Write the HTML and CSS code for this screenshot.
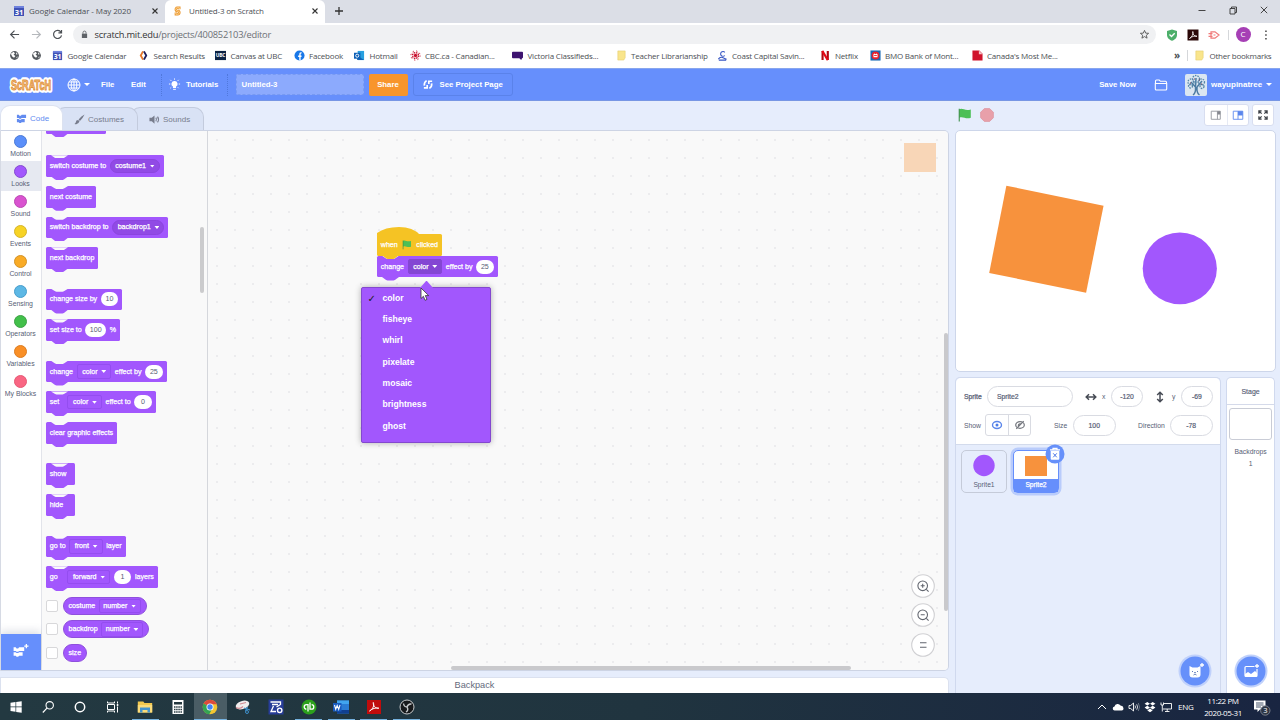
FILE: index.html
```
<!DOCTYPE html>
<html lang="en">
<head>
    <meta charset="utf-8">
    <meta name="viewport" content="width=device-width, initial-scale=1">
    <title>Untitled-3 on Scratch</title>
    <link rel="stylesheet" href="styles.css">
</head>
<body>

    <!-- shared icons -->
    <svg class="defs" width="0" height="0">
        <symbol id="globe" viewBox="0 0 12 12"><circle cx="6" cy="6" r="4.8" fill="#555a5f"/><path d="M2 4l3-2 1.5 1.5L5 5.2l2 1.3-1.5 2L3.5 7zM8 2.5l1.500 2-1.800.4zM8 7.500l1.600-.5-1 2z" fill="#fff"/></symbol>
        <symbol id="note" viewBox="0 0 12 12"><path d="M2 1h8v7.500L8.500 11H2z" fill="#f9e58c" stroke="#e3cb6a" stroke-width=".6"/></symbol>
        <symbol id="flag" viewBox="0 0 14 15"><path d="M1 1.500c3.500-2.200 5.500 2 12 0v8.500c-5 2.200-8-2-12 0z" fill="#4cbf56"/><path d="M1 .8V14" stroke="#3a8f47" stroke-width="1.200"/></symbol>
        <symbol id="blocks" viewBox="0 0 12 10"><path d="M1 1h2l.8 1h1.500L6.200 1H11v3.400H6.200l-.9.8H3.800L3 4.400H1zM1 5.600h2l.8.8h1.500l.9-.8H9.500V9H6.200l-.9.8H3.800L3 9H1z"/></symbol>
    </svg>

    <div class="tabstrip">
        <div class="tab">
            <svg class="ico" viewBox="0 0 12 12"><path d="M1 2h10v9H1z" fill="#3f51b5"/><path d="M1 1h10v2H1z" fill="#6f82dd"/><text x="6" y="9.600" font-size="7.500" font-weight="700" text-anchor="middle" fill="#fff">31</text></svg>
            <span>Google Calendar - May 2020</span>
            <svg class="close" viewBox="0 0 8 8"><path d="M1.500 1.500l5 5M6.500 1.500l-5 5"/></svg>
        </div>
        <div class="tab active">
            <svg class="ico" viewBox="0 0 12 12"><path d="M8 4.200V2.500H5.500C3.600 2.500 3.800 6 5.500 6h1.200C8.700 6 8.500 9.500 6.300 9.500H4.200V7.700" fill="none" stroke="#e9952d" stroke-width="2.600"/><path d="M8 4.200V2.500H5.500C3.600 2.500 3.800 6 5.500 6h1.200C8.700 6 8.500 9.500 6.300 9.500H4.200V7.700" fill="none" stroke="#ffd999" stroke-width="1"/></svg>
            <span>Untitled-3 on Scratch</span>
            <svg class="close" viewBox="0 0 8 8"><path d="M1.500 1.500l5 5M6.500 1.500l-5 5"/></svg>
        </div>
        <svg class="plus" viewBox="0 0 10 10"><path d="M5 1v8M1 5h8"/></svg>
        <div class="winbtns">
            <svg viewBox="0 0 10 10"><path d="M1.500 5.500h7"/></svg>
            <svg viewBox="0 0 10 10"><path d="M2 3.500h5V9H2zM3.500 3.500V2h5v5.500H7"/></svg>
            <svg viewBox="0 0 10 10"><path d="M1.800 1.800l6.400 6.400M8.200 1.800L1.800 8.200"/></svg>
        </div>
    </div>

    <div class="toolbar">
        <svg class="nav" viewBox="0 0 12 12"><path d="M11 6H2M6 1.800L1.800 6 6 10.200"/></svg>
        <svg class="nav off" viewBox="0 0 12 12"><path d="M1 6h9M6 1.800L10.200 6 6 10.200"/></svg>
        <svg class="nav" viewBox="0 0 12 12"><path d="M9.800 3.500A4.400 4.400 0 1 0 10.400 7M10.400 1v3.300H7"/></svg>
        <div class="url">
            <svg class="lock" viewBox="0 0 8 10"><path d="M1 4h6v5H1z" fill="#5f6368"/><path d="M2.300 4V2.800a1.700 1.700 0 0 1 3.400 0V4" fill="none" stroke="#5f6368"/></svg>
            <span>scratch.mit.edu<i>/projects/400852103/editor</i></span>
            <svg class="star" viewBox="0 0 12 12"><path d="M6 1.500l1.300 3 3.200.2-2.500 2.100.8 3.200L6 8.300 3.200 10 4 6.800 1.500 4.700l3.200-.2z"/></svg>
        </div>
        <div class="exts">
            <svg viewBox="0 0 12 12"><path d="M6 .5l5 1.500v4c0 3-2.500 4.800-5 5.800C3.500 10.800 1 9 1 6V2z" fill="#4caf6a"/><path d="M3.500 5.500l2 2 3.200-3.300" fill="none" stroke="#fff" stroke-width="1.300"/></svg>
            <svg viewBox="0 0 12 12"><path d="M.5.500h11v11H.5z" fill="#2b0808"/><path d="M2.500 9.500C5 8 6.500 5 5.800 2.500 5.500 5 7 7.500 10 7.300 7.500 6.800 5 7.300 2.500 9.500z" fill="none" stroke="#fff" stroke-width=".8"/></svg>
            <svg viewBox="0 0 12 12"><path d="M3 2.800h4L11 6 7 9.200H3zM.5 4.700h4M.5 7.300h4M5.500 6h2" fill="none" stroke="#f07a7a" stroke-width="1.200"/></svg>
            <b class="sep"></b>
            <span class="profile">C</span>
            <svg viewBox="0 0 12 12"><path d="M5.200 1.500h1.500v1.500H5.200zM5.200 5.200h1.500v1.500H5.200zM5.200 9h1.500v1.500H5.200z" fill="#444"/></svg>
        </div>
    </div>

    <div class="bookmarks">
        <span><svg viewBox="0 0 12 12"><use href="#globe"/></svg></span>
        <span><svg viewBox="0 0 12 12"><use href="#globe"/></svg></span>
        <span><svg viewBox="0 0 12 12"><path d="M1 2h10v9H1z" fill="#3f51b5"/><path d="M1 1h10v2H1z" fill="#6f82dd"/><text x="6" y="9.600" font-size="7.500" font-weight="700" text-anchor="middle" fill="#fff">31</text></svg>Google Calendar</span>
        <span><svg viewBox="0 0 12 12"><path d="M5.500 1.500L3 6l2.500 4.500" fill="none" stroke="#e5782c" stroke-width="2"/><path d="M6.500 1.500L9 6l-2.500 4.500" fill="none" stroke="#1e1f5e" stroke-width="2"/></svg>Search Results</span>
        <span><svg viewBox="0 0 12 12"><path d="M0 1h12v10H0z" fill="#0c2344"/><text x="6" y="8" font-size="5.300" font-weight="700" text-anchor="middle" fill="#fff">UBC</text></svg>Canvas at UBC</span>
        <span><svg viewBox="0 0 12 12"><circle cx="6" cy="6" r="5.500" fill="#1877e8"/><path d="M6.500 11.500V6.800M4.500 6.800h3.700M6.500 7V4.500Q6.500 3 8.300 3.200" fill="none" stroke="#fff" stroke-width="1.500"/></svg>Facebook</span>
        <span><svg viewBox="0 0 12 12"><path d="M4 1h7v10H4z" fill="#28a0e0"/><path d="M3.500 6L11 11H3.500z" fill="#1363b5"/><path d="M0 3h7v6.500H0z" fill="#0a5eb5"/><circle cx="3.500" cy="6.200" r="1.700" fill="none" stroke="#fff"/></svg>Hotmail</span>
        <span><svg viewBox="0 0 12 12"><circle cx="6" cy="6" r="1.800" fill="#c8102e"/><circle cx="6" cy="6" r="3.200" fill="none" stroke="#c8102e" stroke-width="1.500" stroke-dasharray="1.700 .8"/><circle cx="6" cy="6" r="5" fill="none" stroke="#c8102e" stroke-width="1" stroke-dasharray="1.500 2.430"/></svg>CBC.ca - Canadian...</span>
        <span><svg viewBox="0 0 12 12"><path d="M1 2h10q1 0 1 1v5q0 1-1 1l-1 2-2-2H1Q0 9 0 8V3q0-1 1-1z" fill="#3e1470"/></svg>Victoria Classifieds...</span>
        <span><svg viewBox="0 0 12 12"><use href="#note"/></svg>Teacher Librarianship</span>
        <span><svg viewBox="0 0 12 12"><path d="M8.500 2.500A2.600 2.600 0 1 0 8.500 6M1.500 10q2-3 4.500-1.800T10.500 10M2 11h8" fill="none" stroke="#3857c4" stroke-width="1.200"/></svg>Coast Capital Savin...</span>
        <span><svg viewBox="0 0 12 12"><path d="M2.800 1v10M8.500 1v10" stroke="#b20710" stroke-width="2.300"/><path d="M2.500 1l6 10" stroke="#e50914" stroke-width="2.300"/></svg>Netflix</span>
        <span><svg viewBox="0 0 12 12"><path d="M.5.500h11v11H.5z" fill="#1569b5"/><circle cx="6" cy="6" r="4.300" fill="#e8212d"/><path d="M3.800 8V4.500l1.100-.7L6 4.500l1.100-.7 1.100.7V8z" fill="#fff"/><path d="M4.500 6h3" stroke="#e8212d"/></svg>BMO Bank of Mont...</span>
        <span><svg viewBox="0 0 12 12"><path d="M.5.500H8L11.500 4v7.500H.5z" fill="#d0142c"/><path d="M7.500.500L11.500 4.500H7.500z" fill="#f3c5c8"/></svg>Canada's Most Me...</span>
        <span class="more">»</span>
        <span class="other"><svg viewBox="0 0 12 12"><use href="#note"/></svg>Other bookmarks</span>
    </div>

    <div class="menubar">
        <svg class="logo" viewBox="0 0 48 22"><g stroke-linejoin="round" font-weight="700" text-anchor="middle"><text class="logo-out" x="24" y="16" textLength="40" lengthAdjust="spacingAndGlyphs">ScRATcH</text><text class="logo-in" x="24" y="16" textLength="40" lengthAdjust="spacingAndGlyphs">ScRATcH</text></g></svg>
        <div class="lang"><svg viewBox="0 0 14 14"><g fill="none" stroke="#fff" stroke-width="1"><circle cx="7" cy="7" r="6"/><ellipse cx="7" cy="7" rx="2.800" ry="6"/><path d="M1 7h12M2 4h10M2 10h10M7 1v12"/></g></svg><b class="caret"></b></div>
        <span>File</span>
        <span>Edit</span>
        <div class="tutorials"><svg viewBox="0 0 14 14"><path d="M7 3.200a3.200 3.200 0 0 1 1.700 6v1.600H5.300V9.200a3.200 3.200 0 0 1 1.700-6z" fill="#fff"/><path d="M5.500 12.200h3M7 .5v1.300M1 6.500h1.500M11.500 6.500H13M2.500 2l1.100 1.100M11.500 2l-1.100 1.100M2.500 11l1-1M11.500 11l-1-1" stroke="#fff"/></svg>Tutorials</div>
        <div class="title">Untitled-3</div>
        <div class="share">Share</div>
        <div class="see"><svg viewBox="0 0 12 12"><path d="M4.500 1.800Q1.500 3.500 2 7.300M1.500 9.600h3.600V6.500M7.500 10.200Q10.500 8.500 10 4.700M10.500 2.400H6.900V5.500" fill="none" stroke="#fff" stroke-width="1.800"/></svg>See Project Page</div>
        <div class="account">
            <span>Save Now</span>
            <svg class="folder" viewBox="0 0 14 12"><path d="M1.500 4.500V2q0-1 1-1h2.700l1.300 1.300h5q1 0 1 1v1.200M1.300 4.500h11.400V10q0 1-1 1H2.300q-1 0-1-1z" fill="none" stroke="#fff" stroke-width="1.100"/></svg>
            <svg class="avatar" viewBox="0 0 22 22"><rect width="22" height="22" rx="2" fill="#dbe6f1"/><path d="M8 21q3-2 2.500-8L6 8M10.500 13l.5-9M12 13l5-6M14.500 21q-3-2-2.500-8" fill="none" stroke="#4c7ba2" stroke-width="1.500"/><g fill="none" stroke="#5686a8" stroke-width="1.300" stroke-dasharray="1.500 1"><circle cx="6" cy="8" r="3"/><circle cx="11" cy="5" r="3.500"/><circle cx="16.500" cy="8" r="3"/><circle cx="5.500" cy="12" r="2"/><circle cx="17" cy="12.500" r="2"/></g><path d="M5 9h1M9 5h1M14 6h1M16 10h1" stroke="#8d4054"/></svg>
            <span class="user">wayupinatree</span>
            <b class="caret"></b>
        </div>
    </div>

    <div class="editor">
        <div class="left">
            <div class="modes">
                <div class="mode on"><svg viewBox="0 0 12 10"><use href="#blocks"/></svg>Code</div>
                <div class="mode costumes"><svg viewBox="0 0 12 12"><path d="M11.500.500Q8 2 5 6l1.500 1.500Q10 4 11.500.500zM4.500 6.500Q2 6.500 2 9 1.500 10.500.5 10.800 4.500 12.500 6 8z" fill="#777c8c"/></svg>Costumes</div>
                <div class="mode sounds"><svg viewBox="0 0 12 12"><path d="M.5 4h2.500L6 1.500v9L3 8H.5z" fill="#777c8c"/><path d="M7.500 4q1.300 2 0 4M9.300 2.800q2.200 3.200 0 6.400" fill="none" stroke="#777c8c" stroke-width="1.200"/></svg>Sounds</div>
            </div>

            <div class="code">
                <div class="categories">
                    <div class="cat"><i class="motion"></i>Motion</div>
                    <div class="cat selected"><i class="looks"></i>Looks</div>
                    <div class="cat"><i class="sound"></i>Sound</div>
                    <div class="cat"><i class="events"></i>Events</div>
                    <div class="cat"><i class="control"></i>Control</div>
                    <div class="cat"><i class="sensing"></i>Sensing</div>
                    <div class="cat"><i class="operators"></i>Operators</div>
                    <div class="cat"><i class="variables"></i>Variables</div>
                    <div class="cat"><i class="myblocks"></i>My Blocks</div>
                    <div class="extension"><svg viewBox="0 0 16 14"><g transform="translate(0 3)"><use href="#blocks" width="13" height="10"/></g><path d="M13.500 .8v4M11.500 2.800h4" stroke="#fff" stroke-width="1.200"/></svg></div>
                </div>

                <div class="palette">
                    <div class="block cut"></div>
                    <div class="block"><span>switch costume to</span><em class="pill">costume1</em></div>
                    <div class="block"><span>next costume</span></div>
                    <div class="block"><span>switch backdrop to</span><em class="pill">backdrop1</em></div>
                    <div class="block end"><span>next backdrop</span></div>
                    <div class="block"><span>change size by</span><u>10</u></div>
                    <div class="block end"><span>set size to</span><u>100</u><span>%</span></div>
                    <div class="block"><span>change</span><em>color</em><span>effect by</span><u>25</u></div>
                    <div class="block"><span class="short">set</span><em>color</em><span>effect to</span><u>0</u></div>
                    <div class="block end"><span>clear graphic effects</span></div>
                    <div class="block"><span>show</span></div>
                    <div class="block end"><span>hide</span></div>
                    <div class="block"><span class="short">go to</span><em>front</em><span>layer</span></div>
                    <div class="block last"><span class="short">go</span><em>forward</em><u>1</u><span>layers</span></div>
                    <div class="row"><i></i><div class="reporter"><span>costume</span><em>number</em></div></div>
                    <div class="row"><i></i><div class="reporter"><span>backdrop</span><em>number</em></div></div>
                    <div class="row"><i></i><div class="reporter"><span>size</span></div></div>
                    <div class="palette-bar"></div>
                </div>

                <div class="workspace">
                    <div class="ghost-sprite"></div>
                    <div class="script">
                        <div class="block hat"><svg class="hump" viewBox="0 0 65 8"><path d="M0 8V6Q8 0 22 0T43 8z" fill="#f5c324"/></svg><span>when</span><svg class="flag" viewBox="0 0 14 15"><use href="#flag"/></svg><span>clicked</span></div>
                        <div class="block"><span>change</span><em class="open">color</em><span>effect by</span><u>25</u></div>
                    </div>
                    <div class="dropdown">
                        <div class="checked">color</div>
                        <div>fisheye</div>
                        <div>whirl</div>
                        <div>pixelate</div>
                        <div>mosaic</div>
                        <div>brightness</div>
                        <div>ghost</div>
                    </div>
                    <svg class="cursor" viewBox="0 0 10 15"><path d="M1 1v10.500l2.400-2.200L5 13.300l2-.9-1.700-3.800h3.400z" fill="#fff" stroke="#333" stroke-width=".8"/></svg>
                    <div class="zoom">
                        <svg viewBox="0 0 24 24"><circle class="ring" cx="12" cy="12" r="11.300"/><circle cx="11.700" cy="11.800" r="4.800"/><path d="M15.300 15.300l2.300 2.300M9.700 11.800h4M11.700 9.800v4"/></svg>
                        <svg viewBox="0 0 24 24"><circle class="ring" cx="12" cy="12" r="11.300"/><circle cx="11.700" cy="11.800" r="4.800"/><path d="M15.300 15.300l2.300 2.300M9.700 11.800h4"/></svg>
                        <svg viewBox="0 0 24 24"><circle class="ring" cx="12" cy="12" r="11.300"/><path d="M9 9.800h6.500M9 14.200h6.500"/></svg>
                    </div>
                    <div class="hbar"></div>
                    <div class="vbar"></div>
                </div>
            </div>

            <div class="backpack">Backpack</div>
        </div>

        <div class="right">
            <div class="stage-head">
                <svg class="go" viewBox="0 0 14 15"><use href="#flag"/></svg>
                <svg class="stop" viewBox="0 0 14 14"><path d="M4.300.600h5.400l3.700 3.700v5.400l-3.700 3.700H4.300L.6 9.700V4.300z" fill="#e8a0aa" stroke="#dd929e" stroke-width=".7"/></svg>
                <div class="sizes">
                    <svg viewBox="0 0 22 21"><path d="M6 6.500h9.500v8.500H6zM12.500 6.500v8.500" fill="none" stroke="#9a9ca3"/><path d="M12.500 6.500h3v3.500h-3z" fill="#85878e"/></svg>
                    <svg viewBox="0 0 22 21"><path d="M5.500 6.500H15.500v8.500H5.500zM10.500 6.500v8.500" fill="none" stroke="#6690f0"/><path d="M10.500 6.500h5v4.500h-5z" fill="#5b86ec"/></svg>
                </div>
                <div class="full"><svg viewBox="0 0 22 21"><path d="M6.500 9V6h3M12.500 6h3v3M15.500 12v3h-3M9.500 15h-3v-3M6.500 6l3 3M15.500 6l-3 3M15.500 15l-3-3M6.500 15l3-3" fill="none" stroke="#3c4046" stroke-width="1.400"/></svg></div>
            </div>
            <div class="stage"><svg viewBox="0 0 320 240"><path d="M50.500 54.500l97.500 20-17.500 87.500L33.300 142z" fill="#f7923d"/><ellipse cx="224.500" cy="137.500" rx="37.200" ry="36" fill="#a257fd"/></svg></div>
            <div class="panes">
                <div class="sprites">
                    <div class="info">
                        <div class="line">
                            <strong class="lbl">Sprite</strong><span class="field name">Sprite2</span>
                            <svg class="arrows" viewBox="0 0 12 12"><path d="M2 6h8M4 3.200L1.200 6 4 8.800M8 3.200L10.800 6 8 8.800"/></svg><span class="x">x</span><span class="field fx">-120</span>
                            <svg class="arrows" viewBox="0 0 12 12"><path d="M6 2v8M3.200 4L6 1.200 8.800 4M3.200 8L6 10.800 8.800 8"/></svg><span class="y">y</span><span class="field fy">-69</span>
                        </div>
                        <div class="line second">
                            <span class="lbl">Show</span>
                            <div class="eyes">
                                <svg viewBox="0 0 12 12"><ellipse cx="6" cy="6" rx="4.500" ry="3.500" fill="none" stroke="#5b86ea" stroke-width="1.400"/><circle cx="6" cy="6" r="1.500" fill="#4a7be8"/></svg>
                                <svg viewBox="0 0 12 12"><g fill="none" stroke="#74777e" stroke-width="1.200"><ellipse cx="6" cy="6" rx="4.300" ry="3.400"/><path d="M2.300 9.800l7.400-7.600M4.500 7.200Q4 5 6.500 4.500"/></g></svg>
                            </div>
                            <span class="size">Size</span><span class="field fs">100</span>
                            <span class="dir">Direction</span><span class="field fs">-78</span>
                        </div>
                    </div>
                    <div class="tiles">
                        <div class="tile"><svg viewBox="0 0 44 28"><circle cx="22" cy="14.500" r="10.700" fill="#a257fd"/></svg><span>Sprite1</span></div>
                        <div class="tile picked"><svg viewBox="0 0 44 28"><path d="M11 5h22v20H11z" fill="#f7923d"/></svg><span>Sprite2</span>
                            <svg class="trash" viewBox="0 0 20 20"><circle cx="10" cy="10" r="9.500" fill="#6690fa"/><path d="M5 5.800h10M8 5.500V4.300h4v1.200" fill="none" stroke="#fff" stroke-width="1.200"/><path d="M5.700 6.800h8.600v8q0 1-1 1H6.700q-1 0-1-1z" fill="#fff"/><path d="M8.200 9.300l3.600 4M11.800 9.300l-3.600 4" stroke="#4f79e8"/></svg>
                        </div>
                    </div>
                    <svg class="add" viewBox="0 0 34 34"><circle cx="17" cy="17" r="16.500" fill="#c0d1fb"/><circle cx="17" cy="17" r="14.500" fill="#6690fa"/><path d="M11.500 12l3 1.500h5l3-1.500v8.500q0 3-3 3h-5q-3 0-3-3z" fill="#fff"/><path d="M14 17.500h1M19 17.500h1M16.200 18.500h1.600M15.500 21l1.500-1 1.500 1" stroke="#5470b5" fill="none" stroke-width=".9"/><path d="M24 9v4M22 11h4" stroke="#fff" stroke-width="1.300"/></svg>
                </div>
                <div class="backdrops">
                    <div class="label">Stage</div>
                    <div class="thumb"></div>
                    <span>Backdrops</span>
                    <span class="count">1</span>
                    <svg class="add" viewBox="0 0 34 34"><circle cx="17" cy="17" r="16.500" fill="#c0d1fb"/><circle cx="17" cy="17" r="14.500" fill="#6690fa"/><path d="M20.500 12.500H12q-1 0-1 1v8q0 1 1 1h10q1 0 1-1V15" fill="none" stroke="#fff" stroke-width="1.200"/><path d="M11 20l3-2 3 2 4-3 2 2v3.500H11z" fill="#fff"/><path d="M23 10v4M21 12h4" stroke="#fff" stroke-width="1.300"/></svg>
                </div>
            </div>
        </div>
    </div>

    <div class="taskbar">
        <div class="apps">
            <div><svg viewBox="0 0 16 16"><path d="M2.500 3.800l5-.7v4.500h-5zM8.200 3l5.500-.8v5.400H8.200zM2.500 8.300h5v4.500l-5-.7zM8.200 8.300h5.500v5.400l-5.500-.8z" fill="#fff"/></svg></div>
            <div><svg viewBox="0 0 16 16"><path d="M7 9.200L2.800 13.500" stroke="#fff" stroke-width="1.200"/><circle cx="9.700" cy="6.300" r="3.700" fill="none" stroke="#fff" stroke-width="1.100"/></svg></div>
            <div><svg viewBox="0 0 16 16"><circle cx="8" cy="8" r="4.700" fill="none" stroke="#fff" stroke-width="1.500"/></svg></div>
            <div><svg viewBox="0 0 16 16"><path d="M2.500 5.500h7v5h-7zM2.500 2.500v1.500h7V2.500M2.500 13.500V12h7v1.500M12.500 2.500v2M12.500 7.500v6" fill="none" stroke="#fff"/><path d="M11.800 5h1.500v2h-1.500z" fill="#fff"/></svg></div>
            <div class="run"><svg viewBox="0 0 16 16"><path d="M.8 2.500h5.500L7.500 4h7.700v9.500H.8z" fill="#f1c84f"/><path d="M.8 6h14.400v7.500H.8z" fill="#fbdc7b"/><path d="M3 13.500V8.500h10v5h-2.500V11h-5v2.500z" fill="#4394cf"/></svg></div>
            <div><svg viewBox="0 0 16 16"><path d="M2.500 1h11v14h-11z" fill="#fff"/><path d="M4 3h8v2.500H4z" fill="#25383f"/><path d="M4 8h8M4 10.500h8M4 13h8" stroke="#25383f" stroke-width="1.300" stroke-dasharray="1.500 .66"/></svg></div>
            <div class="run current"><svg viewBox="0 0 16 16"><circle cx="8" cy="8" r="7.300" fill="#f3c530"/><path d="M8 8L1.500 4.600A7.300 7.300 0 0 1 14.800 5.300H8z" fill="#dc4a3d"/><path d="M8 8L1.500 4.600a7.300 7.300 0 0 0 5.800 10.700L10 10z" fill="#35a353"/><circle cx="8" cy="8" r="3.500" fill="#fff"/><circle cx="8" cy="8" r="2.700" fill="#4285f4"/></svg></div>
            <div><svg viewBox="0 0 16 16"><ellipse cx="7.500" cy="6" rx="7" ry="4" fill="#f1eded" transform="rotate(-18 7.500 6)"/><path d="M1 8.500q4 2 7-1M5 5l6-1.500" stroke="#d18b92" stroke-width="1.200" fill="none"/><path d="M9 9l6 2M12.500 8l-2 4" stroke="#3e8ec7" stroke-width="1.200"/><circle cx="12" cy="13" r="1.500" fill="none" stroke="#3e8ec7"/></svg></div>
            <div><svg viewBox="0 0 16 16"><path d="M.5.500h15v15H.5z" fill="#273d99"/><path d="M2.500 3h10v2.500L8.500 8M4 5.500h6M5.500 7L3 12.500h5" fill="none" stroke="#fff" stroke-width="1.300"/><circle cx="11.700" cy="11.300" r="2.200" fill="#273d99" stroke="#fff" stroke-width="1.400"/></svg></div>
            <div class="run"><svg viewBox="0 0 16 16"><circle cx="8" cy="8" r="7.500" fill="#2ca01c"/><path d="M7 12.500V5.700H5.400a2.200 2.200 0 0 0 0 4.400M9 3.500v6.600h1.600a2.200 2.200 0 0 0 0-4.400" fill="none" stroke="#fff" stroke-width="1.300"/></svg></div>
            <div class="run"><svg viewBox="0 0 16 16"><path d="M4 1.500h12v13H4z" fill="#2b7cd3"/><path d="M4 1.500h12V5H4z" fill="#41a5ee"/><path d="M4 11h12v3.500H4z" fill="#103f91"/><path d="M0 4h8.500v8.500H0z" fill="#185abd"/><path d="M1.500 6l1.200 4.300L4.200 6.500l1.500 3.800L7 6" fill="none" stroke="#fff" stroke-width="1.100"/></svg></div>
            <div class="run"><svg viewBox="0 0 16 16"><path d="M1 1h14v14H1z" fill="#c00c0c"/><path d="M3.500 12C7 10 8.500 6.500 7.300 3.500 7 6.500 9 9.500 12.800 9.200 9.500 8.500 6.500 9.500 3.500 12z" fill="none" stroke="#fff"/></svg></div>
            <div class="run"><svg viewBox="0 0 16 16"><circle cx="8" cy="8" r="7" fill="#17191b" stroke="#c5c8ca"/><path d="M4.500 4.500Q5 8 8 8M12.500 5Q9 4.500 8 8M7 13q3-2 1-5" fill="none" stroke="#c5c8ca" stroke-width="1.400"/></svg></div>
        </div>
        <div class="tray">
            <svg viewBox="0 0 12 12"><path d="M2 8l4-4 4 4" fill="none" stroke="#fff"/></svg>
            <svg viewBox="0 0 12 12"><path d="M3 9.500a2 2 0 0 1-.5-4A3.300 3.300 0 0 1 8.500 4.500q2.800.3 3 2.700t-2 2.300z" fill="#fff"/></svg>
            <svg viewBox="0 0 12 12"><path d="M1 4.500h1.700L5.500 2v8L2.700 7.500H1z" fill="none" stroke="#fff" stroke-width=".9"/><path d="M7 4.500q1 1.500 0 3M8.700 3.300q1.800 2.700 0 5.400" fill="none" stroke="#fff" stroke-width=".8"/><path d="M10.300 2q2.400 4 0 8" fill="none" stroke="#7b8794" stroke-width=".8"/></svg>
            <svg viewBox="0 0 12 12"><path d="M3.300 1L6 2.800 3.300 4.600.6 2.800zM8.700 1l2.700 1.800-2.700 1.800L6 2.800zM3.300 4.800L6 6.600 3.300 8.400.6 6.600zM8.700 4.800l2.700 1.800-2.700 1.800L6 6.600zM6 7.600L8.700 9.400 6 11.200 3.300 9.400z" fill="#fff"/></svg>
            <svg viewBox="0 0 12 12"><path d="M4 2.500h7.500v5.500H3M5 10.500h4.500M7.200 8v2.500M1 1.500v2.500h2.500V1.500M2.300 4v6.500" fill="none" stroke="#fff" stroke-width=".9"/></svg>
            <span class="eng">ENG</span>
            <span class="clock">11:22 PM<br>2020-05-31</span>
            <svg class="notif" viewBox="0 0 18 18"><path d="M1 2.500h11.500v9H7L4.500 14v-2.500H1z" fill="#fff"/><path d="M3 5h7.500M3 7h7.500M3 9h5" stroke="#1b2c46" stroke-width=".8"/><circle cx="12.300" cy="12.500" r="4.700" fill="#2c3544" stroke="#8b919b" stroke-width=".8"/><text x="12.300" y="15.200" font-size="7.500" text-anchor="middle" fill="#fff">3</text></svg>
        </div>
    </div>

</body>
</html>
```
FILE: styles.css
```
* {
    margin: 0;
    padding: 0;
    box-sizing: border-box;
}

body {
    width: 1280px;
    height: 720px;
    overflow: hidden;
    display: flex;
    flex-direction: column;
    background: #fff;
    font-family: "Liberation Sans", Arial, sans-serif;
    font-size: 8px;
    white-space: nowrap;
}

svg {
    display: block;
    flex: none;
    overflow: visible;
}

.defs {
    position: absolute;
}

i, em {
    font-style: normal;
}

u {
    text-decoration: none;
}

/* ---------- browser ---------- */
.tabstrip, .toolbar, .bookmarks, .taskbar {
    font-family: "Open Sans", "Noto Sans", sans-serif;
}

.tabstrip {
    flex: none;
    height: 23px;
    background: #dbdee6;
    display: flex;
    align-items: center;
}

.tab {
    width: 165px;
    height: 23px;
    padding: 0 6px 1.5px 13px;
    display: flex;
    align-items: center;
    color: #4b4f55;
    font-size: 8px;
    letter-spacing: -0.1px;
}

.tab.active {
    width: 160px;
    padding: 0 6px 1.5px 7px;
    background: #fff;
    border-radius: 6px 6px 0 0;
    letter-spacing: -0.17px;
}

.tab .ico {
    width: 12px;
    height: 12px;
    margin-right: 4px;
}

.tab.active .ico {
    width: 11px;
    margin-right: 6px;
}

.tab .close {
    width: 8px;
    height: 8px;
    margin-left: auto;
    stroke: #333;
    stroke-width: 1.1;
}

.plus {
    width: 10px;
    height: 10px;
    margin-left: 9px;
    margin-top: -1px;
    stroke: #333;
    stroke-width: 1.3;
}

.winbtns {
    margin: -4px 11px 0 auto;
    display: flex;
    gap: 21px;
}

.winbtns svg {
    width: 10px;
    height: 10px;
    fill: none;
    stroke: #333;
    stroke-width: .9;
}

.toolbar {
    flex: none;
    height: 23px;
    padding-left: 9px;
    display: flex;
    align-items: center;
}

.nav {
    width: 11px;
    height: 11px;
    margin-right: 10.5px;
    fill: none;
    stroke: #4c5055;
    stroke-width: 1.3;
}

.nav.off {
    stroke: #b5b8bc;
}

.url {
    width: 1083px;
    height: 19px;
    margin-left: -1px;
    margin-right: 10px;
    padding: 0 6px 0 8px;
    display: flex;
    align-items: center;
    background: #f0f1f3;
    border-radius: 10px;
    font-size: 9.3px;
    letter-spacing: -0.23px;
    color: #333;
}

.url i {
    color: #6c7075;
}

.lock {
    width: 7px;
    height: 9px;
    margin-right: 7px;
}

.star {
    width: 11px;
    height: 11px;
    margin-left: auto;
    fill: none;
    stroke: #555;
}

.exts {
    display: flex;
    align-items: center;
    gap: 9px;
}

.exts svg {
    width: 12px;
    height: 12px;
}

.sep {
    width: 1px;
    height: 10px;
    background: #d5d7da;
    margin: 0 -2px 0 -1px;
}

.profile {
    width: 15px;
    height: 15px;
    border-radius: 50%;
    background: #a63fb5;
    color: #fff;
    font-size: 8px;
    line-height: 14px;
    text-align: center;
}

.bookmarks {
    flex: none;
    height: 22px;
    padding: 0 0 3.5px 9px;
    display: grid;
    grid-template-columns: 21.5px 21.5px 86px 77px 78.5px 60.5px 55.5px 102.5px 103.5px 101px 103px 50px 102px 203.500px 12px 94px;
    align-items: center;
    color: #4c4f54;
    font-size: 8px;
    letter-spacing: -0.2px;
}

.bookmarks span {
    display: flex;
    align-items: center;
    gap: 4.5px;
}

.bookmarks svg {
    width: 11px;
    height: 11px;
}

.bookmarks .more {
    font-size: 10px;
    font-weight: 700;
    margin-left: -1px;
}

.bookmarks .other {
    border-left: 1px solid #d5d7da;
    padding-left: 6px;
    height: 11px;
    letter-spacing: -0.25px;
}

/* ---------- scratch menu ---------- */
.menubar {
    flex: none;
    height: 33px;
    padding-left: 7px;
    display: grid;
    grid-template-columns: 60px 34px 30px 30px 75px 133px 44px 99px 1fr;
    align-items: center;
    background: #668ffc;
    border-top: 1px solid #88a6ee;
    border-bottom: 1px solid #7796e4;
    color: #fff;
    font-size: 7.8px;
    font-weight: 700;
}

.logo {
    width: 48px;
    height: 22px;
    font-size: 14px;
}

.logo-out {
    fill: #fff;
    stroke: #fff;
    stroke-width: 5.5;
}

.logo-in {
    fill: #f8c682;
    stroke: #df9140;
    stroke-width: 1;
}

.lang, .tutorials, .account, .see {
    display: flex;
    align-items: center;
}

.lang {
    gap: 3px;
}

.lang svg {
    width: 14px;
    height: 14px;
}

.caret {
    width: 6px;
    height: 3px;
    background: #fff;
    clip-path: polygon(0 0, 100% 0, 50% 100%);
}

.tutorials {
    width: 67px;
    height: 22px;
    gap: 5px;
    padding-left: 6px;
    border: dotted #5078dc;
    border-width: 0 1px;
}

.tutorials svg {
    width: 13px;
    height: 13px;
}

.title {
    width: 128px;
    height: 21px;
    margin-left: -.5px;
    padding-left: 5px;
    line-height: 19px;
    background: #8caafd;
    border: 1px dashed #789af2;
    border-radius: 2px;
}

.share {
    width: 39px;
    height: 22px;
    margin-left: -.5px;
    line-height: 22px;
    text-align: center;
    background: #f8952c;
    border-radius: 2px;
}

.see {
    width: 100px;
    height: 23px;
    gap: 6px;
    margin-left: -.5px;
    padding-left: 8px;
    border: 1px solid #5a82ea;
    border-radius: 3px;
}

.see svg {
    width: 12px;
    height: 11px;
}

.account {
    justify-content: flex-end;
    padding-right: 8px;
}

.account .folder {
    width: 14px;
    height: 12px;
    margin: 0 17px 0 18px;
}

.account .avatar {
    width: 22px;
    height: 22px;
    margin-right: 4px;
}

.account .user {
    width: 55px;
    font-size: 8px;
}

/* ---------- editor ---------- */
.editor {
    flex: none;
    height: 592px;
    display: flex;
    background: #e6edfc;
}

.left {
    width: 949px;
    display: flex;
    flex-direction: column;
}

.modes {
    flex: none;
    height: 29px;
    display: flex;
    align-items: flex-end;
}

.mode {
    height: 23px;
    display: flex;
    align-items: center;
    gap: 3px;
    margin-left: -8px;
    padding-left: 18px;
    background: #d9e2f5;
    border: 1px solid #c3cbdd;
    border-bottom: 0;
    border-radius: 10px 10px 0 0;
    color: #777c8c;
    font-size: 8px;
}

.mode svg {
    width: 11px;
    height: 11px;
}

.mode.on {
    z-index: 2;
    width: 63px;
    height: 25px;
    margin-left: 0;
    padding-left: 15px;
    background: #fff;
    border-color: #dce2f0;
    color: #628bf0;
    fill: #628bf0;
}

.mode.costumes {
    z-index: 1;
    width: 83px;
}

.mode.sounds {
    width: 74px;
}

.code {
    flex: none;
    height: 541px;
    display: flex;
    border: 1px solid #cdd4e4;
    border-left-color: #d6dae4;
    border-radius: 0 5px 5px 0;
    overflow: hidden;
}

.categories {
    width: 41px;
    display: flex;
    flex-direction: column;
    background: #fff;
    border-right: 1px solid #e2e4ea;
}

.cat {
    height: 30px;
    padding: 3.5px 1px 0 0;
    display: flex;
    flex-direction: column;
    align-items: center;
    gap: 1px;
    color: #575e75;
    font-size: 6.9px;
    line-height: 9px;
}

.cat.selected {
    background: #e6e9f1;
}

.cat i {
    width: 13.5px;
    height: 13.5px;
    border-radius: 50%;
    border: 1px solid;
}

.cat .motion { background: #5b8ffa; border-color: #4a7ad6; }
.cat .looks { background: #a257fd; border-color: #844ad0; }
.cat .sound { background: #d953d0; border-color: #bb49b3; }
.cat .events { background: #f7d325; border-color: #d5b42b; }
.cat .control { background: #f9ab26; border-color: #d39226; }
.cat .sensing { background: #5db8e5; border-color: #479dcc; }
.cat .operators { background: #42c04a; border-color: #3ea145; }
.cat .variables { background: #f98f26; border-color: #dc7c20; }
.cat .myblocks { background: #f96683; border-color: #e65974; }

.extension {
    width: 41px;
    height: 36px;
    margin-top: auto;
    margin-left: -1px;
    display: flex;
    align-items: center;
    justify-content: center;
    background: #668ffc;
    box-shadow: 0 -3px 8px rgba(90, 100, 130, 0.2);
}

.extension svg {
    width: 17px;
    height: 15px;
    margin-bottom: 3px;
    fill: #fff;
}

.palette {
    width: 166px;
    position: relative;
    display: flex;
    flex-direction: column;
    align-items: flex-start;
    padding-left: 4px;
    background: #f9f9f9;
    border-right: 1px solid #d5d7dc;
}

.palette-bar {
    position: absolute;
    right: 3px;
    top: 96px;
    width: 4px;
    height: 66px;
    border-radius: 2px;
    background: #cbcbcd;
}

/* stack block: notch on top, bump below */
.block {
    flex: none;
    position: relative;
    height: 21.7px;
    min-width: 29px;
    margin-bottom: 9px;
    padding: 0 4px 0 3.8px;
    display: flex;
    align-items: center;
    gap: 3.6px;
    background: #a257fd;
    border-radius: 1.5px;
    color: #fff;
    font-size: 7.1px;
    -webkit-text-stroke: .25px #fff;
}

.block::before, .block::after {
    content: "";
    position: absolute;
    left: 5px;
    width: 17px;
    height: 3.2px;
    clip-path: polygon(0 0, 100% 0, 76% 85%, 68% 100%, 32% 100%, 24% 85%);
}

.block::before {
    top: 0;
    background: #f9f9f9;
}

.block::after {
    top: 100%;
    margin-top: -.5px;
    height: 3.7px;
    background: #a257fd;
}

.block.end {
    margin-bottom: 19.7px;
}

.block.cut {
    width: 60px;
    margin-top: -18.7px;
    margin-bottom: 21.2px;
}

.block.last {
    margin-bottom: 6.5px;
}

.block .short {
    min-width: 14px;
}

.block em, .reporter em {
    height: 14.5px;
    padding: 0 4px 0 4.5px;
    display: flex;
    align-items: center;
    gap: 3.7px;
    border: 1px solid #944df0;
    border-radius: 2px;
}

.block em::after, .reporter em::after {
    content: "";
    width: 5px;
    height: 3px;
    background: #fff;
    clip-path: polygon(0 0, 100% 0, 50% 100%);
}

.block em.pill {
    background: #914ae5;
    border-color: #8b45de;
    border-radius: 8px;
}

.block em.open {
    background: #8446d3;
    border-color: #8446d3;
}

.block u {
    min-width: 17.5px;
    height: 14px;
    padding: 0 4.5px;
    border-radius: 7px;
    background: #fff;
    color: #575e75;
    text-align: center;
    line-height: 14px;
    -webkit-text-stroke: 0;
}

.row {
    flex: none;
    height: 23.4px;
    display: flex;
    align-items: center;
    gap: 4.5px;
}

.row > i {
    width: 12px;
    height: 12px;
    background: #fff;
    border: 1px solid #d8d8da;
    border-radius: 2px;
}

.reporter {
    height: 18px;
    padding: 0 5px;
    display: flex;
    align-items: center;
    gap: 3.5px;
    background: #a257fd;
    border: .5px solid #8f50dd;
    border-radius: 9px;
    color: #fff;
    font-size: 7.1px;
    -webkit-text-stroke: .25px #fff;
}

.reporter em {
    padding: 0 3.5px;
}

.workspace {
    flex: 1;
    position: relative;
    background-color: #f9f9f9;
    background-image: radial-gradient(circle, #ececee 0.8px, transparent 1.1px);
    background-size: 18px 18px;
    background-position: 0 0;
}

.ghost-sprite {
    position: absolute;
    left: 696px;
    top: 12px;
    width: 32px;
    height: 29px;
    background: #f8d6b7;
}

.script {
    position: absolute;
    left: 169px;
    top: 103px;
    display: flex;
    flex-direction: column;
    align-items: flex-start;
}

.script .block {
    margin: 0;
}

.script .block.hat {
    background: #f5c324;
    gap: 4.3px;
    z-index: 1;
}

.hat::before {
    display: none;
}

.block.hat::after {
    background: #f5c324;
}

.hump {
    position: absolute;
    left: 0;
    top: -7px;
    width: 65px;
    height: 8px;
}

.hat .flag {
    width: 10px;
    height: 10px;
}

.dropdown {
    position: absolute;
    left: 152.5px;
    top: 155.5px;
    width: 130px;
    height: 156.5px;
    padding: 0 0 0 21px;
    background: #a257fd;
    border: 1px solid #8348cf;
    border-radius: 2px;
    box-shadow: 0 0 6px rgba(0, 0, 0, 0.3);
    color: #fff;
    font-size: 8.6px;
    font-weight: 700;
}

.dropdown::before {
    content: "";
    position: absolute;
    left: 58px;
    top: -7px;
    width: 14px;
    height: 8px;
    background: #a257fd;
    clip-path: polygon(50% 0, 100% 100%, 0 100%);
}

.dropdown div {
    height: 21.4px;
    line-height: 21px;
    position: relative;
}

.dropdown .checked::before {
    content: "✓";
    position: absolute;
    left: -15px;
    color: #222;
    font-family: "DejaVu Sans", sans-serif;
    font-size: 10px;
}

.cursor {
    position: absolute;
    left: 212px;
    top: 156px;
    width: 10px;
    height: 15px;
}

.zoom {
    position: absolute;
    right: 13px;
    top: 443px;
    display: flex;
    flex-direction: column;
    gap: 5.3px;
}

.zoom svg {
    width: 24px;
    height: 24px;
    fill: none;
    stroke: #62666f;
    stroke-width: 1.1;
}

.zoom .ring {
    fill: #fff;
    stroke: #d0d0d3;
}

.hbar, .vbar {
    position: absolute;
    background: #c9c9cc;
    border-radius: 2px;
}

.hbar {
    left: 243px;
    bottom: 0;
    width: 400px;
    height: 4px;
}

.vbar {
    right: 0;
    top: 202px;
    width: 4px;
    height: 278px;
}

.backpack {
    height: 16px;
    margin-top: auto;
    background: #fff;
    border: 1px solid #dbe1ef;
    border-bottom: 0;
    border-radius: 0 5px 0 0;
    color: #656a7c;
    font-size: 9.2px;
    line-height: 15px;
    text-align: center;
}

/* ---------- stage side ---------- */
.right {
    width: 321px;
    margin-left: 5px;
    padding-left: 1px;
    display: flex;
    flex-direction: column;
}

.stage-head {
    flex: none;
    height: 29px;
    padding: 3px 0 4px 3px;
    display: flex;
    align-items: center;
}

.go {
    width: 14px;
    height: 14.5px;
}

.stop {
    width: 14px;
    height: 14px;
    margin-left: 7.5px;
}

.sizes, .full {
    display: flex;
    background: #fff;
    border: 1px solid #d8def0;
    border-radius: 3px;
}

.sizes {
    margin-left: auto;
    width: 45px;
}

.sizes svg, .full svg {
    width: 22px;
    height: 20px;
}

.sizes svg + svg {
    border-left: 1px solid #e6eaf4;
}

.full {
    margin-left: 3px;
    margin-right: 1px;
    width: 22px;
}

.full svg {
    width: 20px;
}

.stage {
    flex: none;
    width: 321px;
    height: 242px;
    background: #fff;
    border: 1px solid #cdd6ea;
    border-radius: 5px;
}

.stage svg {
    width: 319px;
    height: 240px;
}

.panes {
    flex: 1;
    margin-top: 5px;
    display: flex;
    gap: 5px;
}

.sprites, .backdrops {
    border: 1px solid #d0d9ee;
    border-bottom: 0;
    border-radius: 5px 5px 0 0;
}

.sprites {
    width: 267px;
    position: relative;
}

.info {
    height: 67px;
    padding: 8px 0 0 8px;
    background: #fff;
    border-bottom: 1px solid #d3dbec;
    border-radius: 5px 5px 0 0;
    color: #575e75;
    font-size: 6.8px;
}

.line {
    height: 21px;
    display: flex;
    align-items: center;
}

.line.second {
    height: 22px;
    margin-top: 7px;
}

.lbl {
    width: 23px;
    font-weight: 400;
}

strong.lbl {
    -webkit-text-stroke: .25px #575e75;
}

.field {
    height: 21px;
    line-height: 19px;
    border: 1px solid #d9dbe2;
    border-radius: 11px;
    text-align: center;
    -webkit-text-stroke: .2px #575e75;
}

.field.name {
    width: 86px;
    padding-left: 9px;
    text-align: left;
}

.fx {
    width: 32px;
}

.fy {
    width: 32px;
}

.fs {
    width: 42.5px;
}

.arrows {
    width: 12px;
    height: 12px;
    margin-left: 12px;
    fill: none;
    stroke: #474b55;
    stroke-width: 1.5;
}

.x {
    width: 9px;
    margin-left: 5px;
}

.fx + .arrows {
    margin-left: 11px;
}

.y {
    width: 9px;
    margin-left: 6px;
}

.eyes {
    width: 46px;
    height: 22px;
    margin-left: -2px;
    display: flex;
    border: 1px solid #d9dbe2;
    border-radius: 3px;
}

.eyes svg {
    width: 22px;
    height: 12px;
    margin: 4px 0;
}

.eyes svg + svg {
    width: 23px;
    height: 20px;
    margin: 0;
    padding: 4px 0;
    border-left: 1px solid #d9dbe2;
}

.size {
    width: 19px;
    margin-left: 23px;
}

.dir {
    width: 32px;
    margin-left: 22.5px;
}

.tiles {
    display: flex;
    gap: 6px;
    padding: 5px 0 0 5px;
}

.tile {
    position: relative;
    width: 46px;
    height: 43px;
    border: 1px solid #c5cbd9;
    border-radius: 5px;
    color: #575e75;
    font-size: 6.7px;
    line-height: 12px;
    text-align: center;
}

.tile > svg {
    width: 44px;
    height: 28px;
}

.tile.picked {
    background: #fff;
    border-color: #668ffc;
    box-shadow: 0 0 0 2.5px #b9ccfb;
    color: #fff;
    -webkit-text-stroke: .25px #fff;
}

.tile.picked span {
    display: block;
    height: 13px;
    background: #668ffc;
}

.tile .trash {
    position: absolute;
    right: -7px;
    top: -7px;
    width: 20px;
    height: 20px;
}

.add {
    position: absolute;
    right: 8px;
    bottom: 5px;
    width: 34px;
    height: 34px;
}

.backdrops {
    width: 49px;
    position: relative;
    display: flex;
    flex-direction: column;
    align-items: center;
    background: #fff;
    color: #575e75;
    font-size: 6.8px;
}

.backdrops .label {
    width: 100%;
    height: 27px;
    border-bottom: 1px solid #d5daea;
    line-height: 27px;
    text-align: center;
    font-size: 7px;
    -webkit-text-stroke: .15px #575e75;
}

.thumb {
    flex: none;
    width: 43px;
    height: 32px;
    margin: 3px 0 8px;
    border: 1px solid #c9ccd6;
    border-radius: 3px;
}

.count {
    margin-top: 5px;
}

.backdrops .add {
    right: 6.5px;
}

/* ---------- taskbar ---------- */
.taskbar {
    flex: none;
    height: 27px;
    display: flex;
    justify-content: space-between;
    background: linear-gradient(90deg, #233941, #20343f 50%, #192541);
    color: #fff;
}

.apps {
    display: flex;
}

.apps div {
    width: 32.7px;
    height: 27px;
    display: flex;
    align-items: center;
    justify-content: center;
}

.apps div:nth-child(-n+4) {
    width: 32.2px;
}

.apps svg {
    width: 16px;
    height: 16px;
}

.apps .run {
    background: linear-gradient(#76b3e0, #76b3e0) center bottom / 27px 1.5px no-repeat;
}

.apps .run.current {
    background: linear-gradient(#76b3e0, #76b3e0) center bottom / 33px 1.5px no-repeat #4a5d65;
}

.tray {
    display: flex;
    align-items: center;
    gap: 4px;
    padding-right: 9px;
}

.tray svg {
    width: 12px;
    height: 12px;
}

.eng {
    width: 17px;
    margin-left: 2px;
    font-size: 8px;
    letter-spacing: -0.2px;
}

.clock {
    width: 42px;
    margin-left: 3px;
    font-size: 8px;
    line-height: 12px;
    letter-spacing: -0.4px;
    text-align: center;
}

.tray .notif {
    width: 18px;
    height: 18px;
    margin-left: 5px;
}
```
